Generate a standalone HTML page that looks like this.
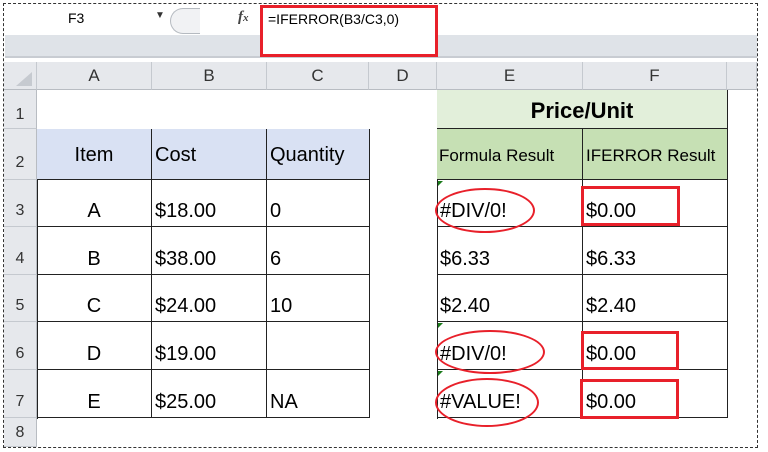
<!DOCTYPE html>
<html><head><style>
*{margin:0;padding:0;box-sizing:border-box}
body{width:768px;height:452px;background:#fff;position:relative;overflow:hidden;font-family:"Liberation Sans",sans-serif;color:#000}
div{position:absolute}
.ch{top:62px;height:28px;background:#e6e8ec;border-right:1px solid #c5c9cf;border-bottom:1px solid #b8bcc2;font-size:17px;color:#333;text-align:center;line-height:28px}
.rh{left:4px;width:33px;background:#e6e8ec;border-bottom:1px solid #c5c9cf;border-right:1px solid #b8bcc2;font-size:16px;color:#333;text-align:center}
.c{font-size:20px;border-right:1.5px solid #222;border-bottom:1.5px solid #222;padding-left:3px;white-space:nowrap}
.ctr{text-align:center;padding-left:0}
.rb{border:3px solid #e8202a}
.ov{border:2.5px solid #e8202a;border-radius:50%}
</style></head><body>
<div style="left:3px;top:3px;width:755px;height:445px;border:1.5px dashed #333"></div>
<!-- formula bar -->
<div style="left:5px;top:5px;width:752px;height:52px;background:#dfe3e8"></div>
<div style="left:5px;top:5px;width:752px;height:30px;background:#fff"></div>
<div style="left:5px;top:56px;width:752px;height:2px;background:#c8ccd2"></div>
<div style="left:68px;top:10px;font-size:14px">F3</div>
<div style="left:155px;top:10px;font-size:10px;color:#333">▼</div>
<div style="left:170px;top:8px;width:30px;height:26px;border:1px solid #b5bac0;border-right:none;border-radius:14px 0 0 14px;background:#f1f2f4"></div>
<div style="left:238px;top:9px;font-family:'Liberation Serif',serif;font-style:italic;font-weight:bold;font-size:15px;color:#444">f<span style="font-size:11px">x</span></div>
<div style="left:260px;top:5px;width:178px;height:52px;background:#fff" class="rb"></div>
<div style="left:268px;top:11px;font-size:14px">=IFERROR(B3/C3,0)</div>
<!-- column headers -->
<div class="ch" style="left:4px;width:33px"></div>
<div style="left:16px;top:72px;width:0;height:0;border-left:16px solid transparent;border-bottom:14px solid #c6cad0"></div>
<div class="ch" style="left:37px;width:115px">A</div>
<div class="ch" style="left:152px;width:115px">B</div>
<div class="ch" style="left:267px;width:102px">C</div>
<div class="ch" style="left:369px;width:68px">D</div>
<div class="ch" style="left:437px;width:146px">E</div>
<div class="ch" style="left:583px;width:144px">F</div>
<div class="ch" style="left:727px;width:30px"></div>
<!-- row headers -->
<div class="rh" style="top:90px;height:39px;line-height:50px">1</div>
<div class="rh" style="top:129px;height:51px;line-height:68px">2</div>
<div class="rh" style="top:180px;height:47px;line-height:62px">3</div>
<div class="rh" style="top:227px;height:48px;line-height:64px">4</div>
<div class="rh" style="top:275px;height:47px;line-height:62px">5</div>
<div class="rh" style="top:322px;height:48px;line-height:64px">6</div>
<div class="rh" style="top:370px;height:48px;line-height:64px">7</div>
<div class="rh" style="top:418px;height:29px;line-height:30px">8</div>
<!-- left table -->
<div style="left:37px;top:129px;width:333px;height:290px;border-left:1.5px solid #222;border-top:1.5px solid #222"></div>
<div class="c ctr" style="left:37px;top:129px;width:115px;height:51px;background:#d9e1f3;line-height:52px">Item</div>
<div class="c" style="left:152px;top:129px;width:115px;height:51px;background:#d9e1f3;line-height:52px">Cost</div>
<div class="c" style="left:267px;top:129px;width:103px;height:51px;background:#d9e1f3;line-height:52px">Quantity</div>

<div class="c ctr" style="left:37px;top:180px;width:115px;height:47px;line-height:62px">A</div>
<div class="c" style="left:152px;top:180px;width:115px;height:47px;line-height:62px">$18.00</div>
<div class="c" style="left:267px;top:180px;width:103px;height:47px;line-height:62px">0</div>
<div class="c ctr" style="left:37px;top:227px;width:115px;height:48px;line-height:64px">B</div>
<div class="c" style="left:152px;top:227px;width:115px;height:48px;line-height:64px">$38.00</div>
<div class="c" style="left:267px;top:227px;width:103px;height:48px;line-height:64px">6</div>
<div class="c ctr" style="left:37px;top:275px;width:115px;height:47px;line-height:62px">C</div>
<div class="c" style="left:152px;top:275px;width:115px;height:47px;line-height:62px">$24.00</div>
<div class="c" style="left:267px;top:275px;width:103px;height:47px;line-height:62px">10</div>
<div class="c ctr" style="left:37px;top:322px;width:115px;height:48px;line-height:64px">D</div>
<div class="c" style="left:152px;top:322px;width:115px;height:48px;line-height:64px">$19.00</div>
<div class="c" style="left:267px;top:322px;width:103px;height:48px;line-height:64px"></div>
<div class="c ctr" style="left:37px;top:370px;width:115px;height:48px;line-height:64px">E</div>
<div class="c" style="left:152px;top:370px;width:115px;height:48px;line-height:64px">$25.00</div>
<div class="c" style="left:267px;top:370px;width:103px;height:48px;line-height:64px">NA</div>
<!-- right table -->
<div style="left:437px;top:90px;width:291px;height:329px;border-left:1.5px solid #222;border-top:1.5px solid #222"></div>
<div class="c ctr" style="left:437px;top:90px;width:291px;height:39px;background:#e2efda;font-weight:bold;font-size:22px;line-height:42px">Price/Unit</div>
<div class="c" style="left:437px;top:129px;width:146px;height:51px;background:#c6e0b4;font-size:17px;line-height:54px;padding-left:2px">Formula Result</div>
<div class="c" style="left:583px;top:129px;width:145px;height:51px;background:#c6e0b4;font-size:17px;line-height:54px">IFERROR Result</div>

<div class="c" style="left:437px;top:180px;width:146px;height:47px;line-height:62px">#DIV/0!</div>
<div class="c" style="left:583px;top:180px;width:145px;height:47px;line-height:62px">$0.00</div>
<div class="c" style="left:437px;top:227px;width:146px;height:48px;line-height:64px">$6.33</div>
<div class="c" style="left:583px;top:227px;width:145px;height:48px;line-height:64px">$6.33</div>
<div class="c" style="left:437px;top:275px;width:146px;height:47px;line-height:62px">$2.40</div>
<div class="c" style="left:583px;top:275px;width:145px;height:47px;line-height:62px">$2.40</div>
<div class="c" style="left:437px;top:322px;width:146px;height:48px;line-height:64px">#DIV/0!</div>
<div class="c" style="left:583px;top:322px;width:145px;height:48px;line-height:64px">$0.00</div>
<div class="c" style="left:437px;top:370px;width:146px;height:48px;line-height:64px">#VALUE!</div>
<div class="c" style="left:583px;top:370px;width:145px;height:48px;line-height:64px">$0.00</div>
<!-- green triangles -->
<div style="left:438px;top:181px;border-top:5px solid #1a7a1a;border-right:5px solid transparent"></div>
<div style="left:438px;top:323px;border-top:5px solid #1a7a1a;border-right:5px solid transparent"></div>
<div style="left:438px;top:371px;border-top:5px solid #1a7a1a;border-right:5px solid transparent"></div>
<!-- annotations -->
<div class="ov" style="left:435px;top:188px;width:100px;height:45px"></div>
<div class="ov" style="left:435px;top:330px;width:110px;height:44px"></div>
<div class="ov" style="left:435px;top:378px;width:104px;height:49px"></div>
<div class="rb" style="left:581px;top:186px;width:99px;height:40px"></div>
<div class="rb" style="left:581px;top:331px;width:98px;height:39px"></div>
<div class="rb" style="left:580px;top:379px;width:99px;height:40px"></div>
</body></html>
